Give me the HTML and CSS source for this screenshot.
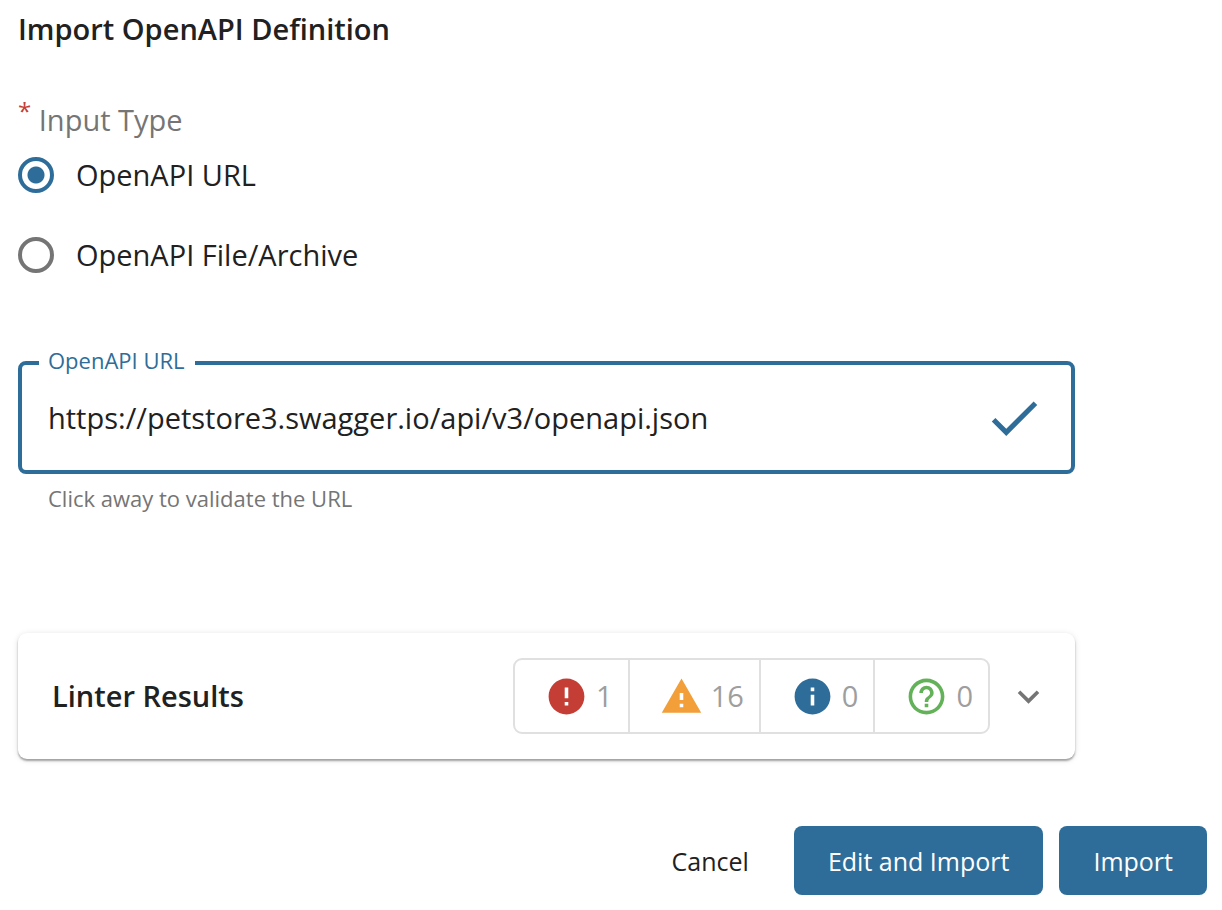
FILE: index.html
```html
<!DOCTYPE html>
<html lang="en">
<head>
  <meta charset="UTF-8" />
  <meta name="viewport" content="width=device-width, initial-scale=1.0" />
  <title>Import OpenAPI Definition</title>
  <link rel="stylesheet" href="styles.css">
</head>
<body>
  <form class="import-form">
    <h1>Import OpenAPI Definition</h1>

    <div class="form-body">
      <!-- Input type -->
      <fieldset class="radio-group">
        <legend><span class="required">*</span> Input Type</legend>
        <label class="radio-row">
          <input type="radio" name="inputType" value="url" checked>
          OpenAPI URL
        </label>
        <label class="radio-row">
          <input type="radio" name="inputType" value="file">
          OpenAPI File/Archive
        </label>
      </fieldset>

      <!-- URL field -->
      <fieldset class="url-field">
        <legend><label for="openapiUrl">OpenAPI URL</label></legend>
        <div class="url-row">
          <input id="openapiUrl" type="text" value="https://petstore3.swagger.io/api/v3/openapi.json" spellcheck="false">
          <svg class="check-icon" viewBox="0 0 24 24"><path d="M9 16.2L4.8 12l-1.4 1.4L9 19 21 7l-1.4-1.4L9 16.2z"/></svg>
        </div>
      </fieldset>
      <p class="helper">Click away to validate the URL</p>

      <!-- Linter summary -->
      <section class="linter">
        <h2>Linter Results</h2>
        <div class="counts">
          <div class="count">
            <svg class="icon error" viewBox="0 0 24 24"><path d="M12 2C6.48 2 2 6.48 2 12s4.48 10 10 10 10-4.48 10-10S17.52 2 12 2zm1 15h-2v-2h2v2zm0-4h-2V7h2v6z"/></svg>
            <span>1</span>
          </div>
          <div class="count">
            <svg class="icon warning" viewBox="0 0 24 24"><path d="M1 21h22L12 2 1 21zm12-3h-2v-2h2v2zm0-4h-2v-4h2v4z"/></svg>
            <span>16</span>
          </div>
          <div class="count">
            <svg class="icon info" viewBox="0 0 24 24"><path d="M12 2C6.48 2 2 6.48 2 12s4.48 10 10 10 10-4.48 10-10S17.52 2 12 2zm1 15h-2v-6h2v6zm0-8h-2V7h2v2z"/></svg>
            <span>0</span>
          </div>
          <div class="count">
            <svg class="icon hint" viewBox="0 0 24 24"><path d="M11 18h2v-2h-2v2zm1-16C6.48 2 2 6.48 2 12s4.48 10 10 10 10-4.48 10-10S17.52 2 12 2zm0 18c-4.41 0-8-3.59-8-8s3.59-8 8-8 8 3.59 8 8-3.59 8-8 8zm0-14c-2.21 0-4 1.79-4 4h2c0-1.1.9-2 2-2s2 .9 2 2c0 2-3 1.75-3 5h2c0-2.25 3-2.5 3-5 0-2.21-1.79-4-4-4z"/></svg>
            <span>0</span>
          </div>
        </div>
        <button type="button" class="expand" aria-label="Expand">
          <svg class="icon" viewBox="0 0 24 24"><path d="M16.59 8.59L12 13.17 7.41 8.59 6 10l6 6 6-6z"/></svg>
        </button>
      </section>
    </div>

    <div class="actions">
      <button type="button" class="btn btn-text">Cancel</button>
      <button type="button" class="btn btn-primary">Edit and Import</button>
      <button type="submit" class="btn btn-primary">Import</button>
    </div>
  </form>
</body>
</html>
```

FILE: styles.css
```css
* {
  box-sizing: border-box;
}

body {
  margin: 0;
  background: #fff;
  color: #212121;
  font-family: "Open Sans", sans-serif;
  font-size: 29px;
  line-height: 40px;
}

fieldset {
  border: 0;
  margin: 0;
  padding: 0;
  min-width: 0;
}

button,
input {
  font: inherit;
  color: inherit;
}

.import-form {
  padding: 9px 15px 15px 18px;
}

h1,
h2 {
  margin: 0;
  font-size: 29px;
  font-weight: 600;
}

.form-body {
  margin: 51px 132px 0 0;
}

.radio-group {
  display: flex;
  flex-direction: column;
}

.radio-group legend {
  padding: 0;
  margin-bottom: 13px;
  color: #757575;
}

.required {
  color: #c43e36;
  font-size: 24px;
  line-height: 20px;
  vertical-align: 11px;
}

.radio-row {
  display: flex;
  align-items: center;
  gap: 22px;
  height: 44px;
}

.radio-row + .radio-row {
  margin-top: 36px;
}

.radio-row input {
  appearance: none;
  flex: none;
  width: 36px;
  height: 36px;
  margin: 0;
  border: 4px solid #757575;
  border-radius: 50%;
}

.radio-row input:checked {
  border-color: #2e6d99;
  background: radial-gradient(circle, #2e6d99 8px, transparent 9px);
}

.url-field {
  margin-top: 73px;
  padding: 0 26px 10px 17px;
  border: 4px solid #2e6d99;
  border-radius: 8px;
}

.url-field legend {
  padding: 0 10px 6px 9px;
  color: #2e6d99;
  font-size: 22px;
  line-height: 20px;
}

.url-row {
  display: flex;
  align-items: center;
  height: 84px;
  padding-left: 9px;
}

.url-row input {
  flex: 1;
  min-width: 0;
  padding: 0;
  border: 0;
  outline: none;
  background: none;
}

.check-icon {
  flex: none;
  width: 62px;
  height: 62px;
  fill: #2e6d99;
}

.helper {
  margin: 9px 0 0 30px;
  color: #757575;
  font-size: 22px;
  line-height: 30px;
}

.linter {
  display: flex;
  align-items: center;
  margin-top: 120px;
  padding: 25px 25px 25px 34px;
  border-radius: 9px;
  box-shadow: 0 2px 2px rgba(0, 0, 0, 0.32), 0 1px 6px rgba(0, 0, 0, 0.12);
}

.counts {
  display: flex;
  margin-left: auto;
  border: 2px solid #e0e0e0;
  border-radius: 9px;
}

.count {
  display: flex;
  align-items: center;
  gap: 8px;
  height: 72px;
  padding: 0 15px 0 30px;
  color: #9e9e9e;
}

.count + .count {
  border-left: 2px solid #e0e0e0;
}

.icon {
  display: block;
  width: 43px;
  height: 43px;
  fill: #757575;
}

.error {
  fill: #c43e36;
}

.warning {
  fill: #f29f3a;
}

.info {
  fill: #2e6d99;
}

.hint {
  fill: #63b259;
}

.expand {
  margin-left: 17px;
  padding: 0;
  border: 0;
  background: none;
  cursor: pointer;
}

.actions {
  display: flex;
  justify-content: flex-end;
  gap: 16px;
  margin-top: 67px;
}

.btn {
  height: 69px;
  padding: 0 34px;
  border: 0;
  border-radius: 8px;
  font-size: 25px;
  cursor: pointer;
}

.btn-text {
  padding: 0 29px;
  background: none;
}

.btn-primary {
  background: #2e6d99;
  color: #fff;
}
```
